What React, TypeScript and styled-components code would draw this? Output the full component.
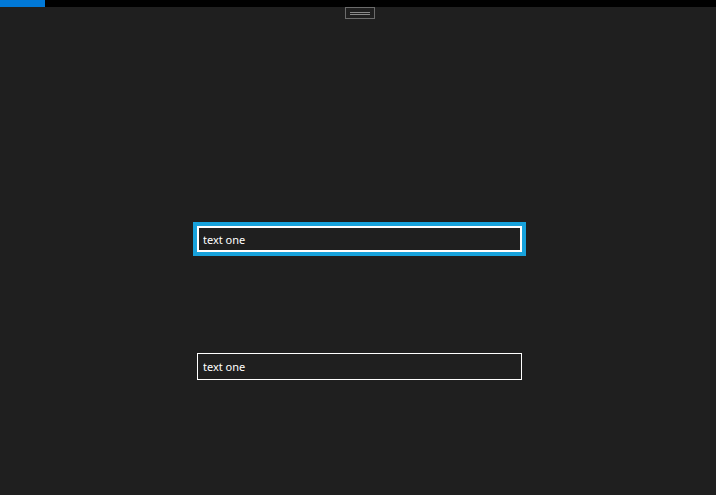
import React from 'react';
import styled, { createGlobalStyle } from 'styled-components';

const GlobalStyle = createGlobalStyle`
    html, body {
        margin: 0;
        padding: 0;
        background: #1f1f1f;
    }
    body {
        font-family: "Noto Sans", "Open Sans", sans-serif;
    }
`;

const Page = styled.div`
    width: 716px;
    height: 495px;
    overflow: hidden;
    display: flex;
    flex-direction: column;
    background: #1f1f1f;
`;

const TopBar = styled.div`
    height: 7px;
    flex-shrink: 0;
    background: #000;
    display: flex;
`;

const Progress = styled.div`
    width: 45px;
    background: #0078d7;
`;

const Content = styled.div`
    display: flex;
    flex-direction: column;
    align-items: center;
    padding-left: 3px;
`;

const Grip = styled.div`
    width: 28px;
    height: 10px;
    border: 1px solid #6b6b6b;
    display: flex;
    flex-direction: column;
    justify-content: center;
    align-items: center;
    gap: 1px;
    span {
        display: block;
        width: 20px;
        height: 1px;
        background: #8a8a8a;
    }
`;

const FieldFrame = styled.div<{ $focused?: boolean; $top: number }>`
    margin-top: ${p => p.$top}px;
    border: 4px solid ${p => (p.$focused ? '#17a2dc' : 'transparent')};
`;

const Field = styled.input<{ $focused?: boolean }>`
    box-sizing: border-box;
    display: block;
    width: 325px;
    height: ${p => (p.$focused ? 26 : 27)}px;
    margin: 0;
    padding: 0 0 0 ${p => (p.$focused ? 4 : 5)}px;
    border: ${p => (p.$focused ? 2 : 1)}px solid #fff;
    border-radius: 0;
    background: #1f1f1f;
    color: #fff;
    font-family: "Noto Sans", "Open Sans", sans-serif;
    font-size: 11px;
    outline: none;
`;

export default function App() {
    return (
        <Page>
            <GlobalStyle />
            <TopBar>
                <Progress />
            </TopBar>
            <Content>
                <Grip>
                    <span />
                    <span />
                </Grip>
                <FieldFrame $focused $top={203}>
                    <Field $focused readOnly defaultValue="text one" />
                </FieldFrame>
                <FieldFrame $top={93}>
                    <Field readOnly defaultValue="text one" />
                </FieldFrame>
            </Content>
        </Page>
    );
}
